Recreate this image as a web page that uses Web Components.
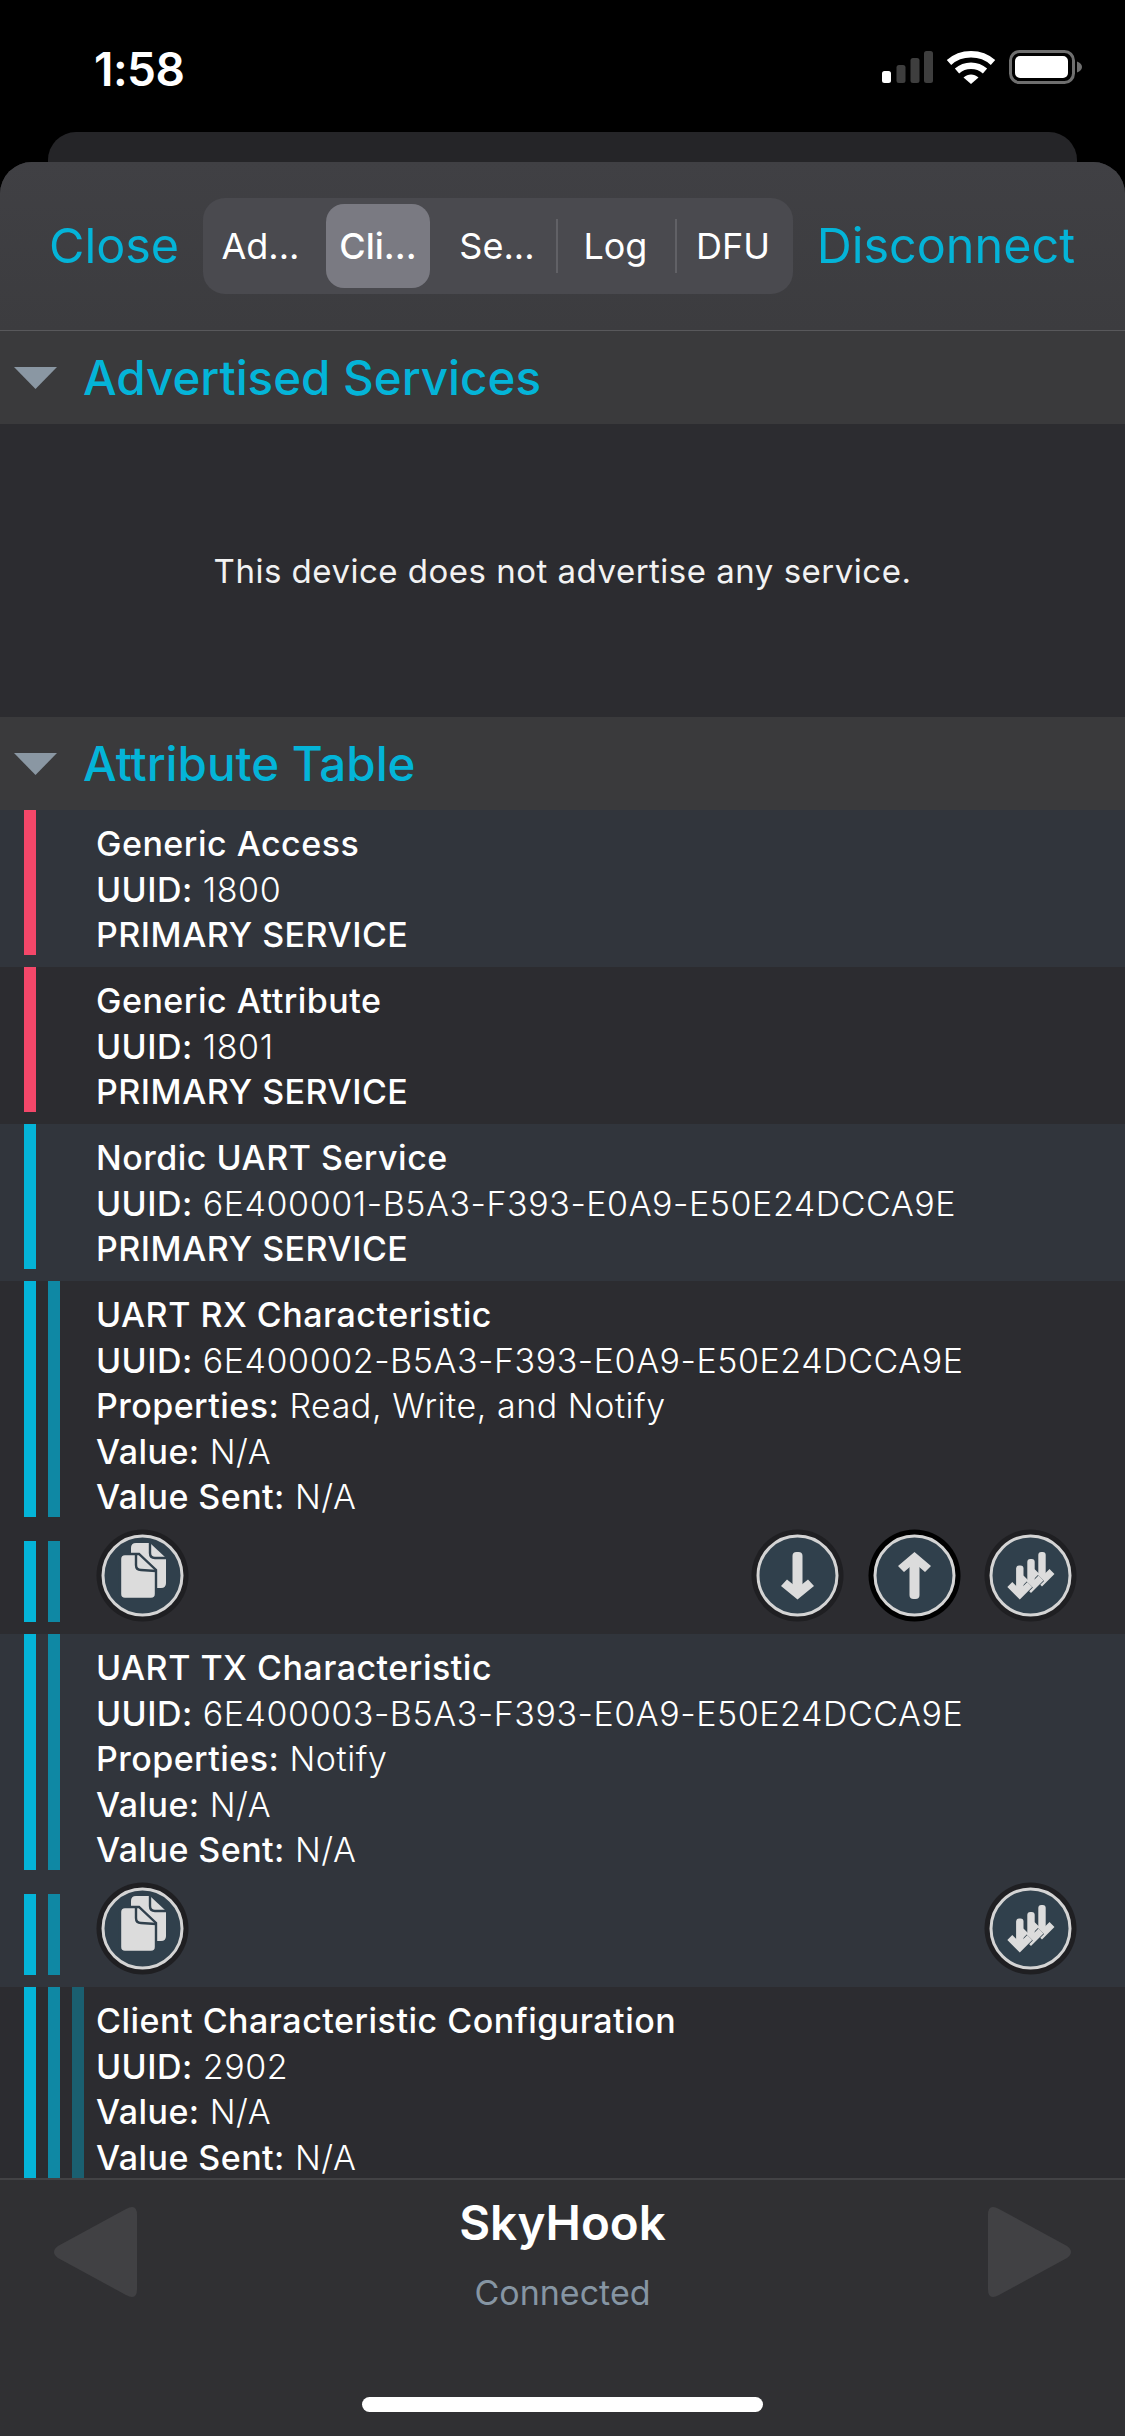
<!DOCTYPE html>
<html>
<head>
<meta charset="utf-8">
<title>SkyHook</title>
<style>
  html, body { margin: 0; padding: 0; background: #000; }
  body { width: 1125px; height: 2436px; overflow: hidden; font-family: Inter, "Liberation Sans", sans-serif; color: #fff; }
  #app { display: flex; flex-direction: column; height: 2436px; }
</style>
</head>
<body>
<div id="app">
  <status-bar></status-bar>
  <back-sheet></back-sheet>
  <main-sheet>
    <nav-bar slot="nav">
      <seg-control>
        <seg-item w="117" style="padding-right:14px">Ad...</seg-item>
        <seg-item w="104" selected>Cli...</seg-item>
        <seg-item w="126" style="padding-left:8px">Se...</seg-item>
        <seg-item w="119" divider>Log</seg-item>
        <seg-item w="112" divider style="padding-left:4px">DFU</seg-item>
      </seg-control>
    </nav-bar>

    <section-header>Advertised Services</section-header>
    <empty-note>This device does not advertise any service.</empty-note>

    <section-header>Attribute Table</section-header>

    <attr-row alt>
      <attr-seg bars="red">
        <attr-line>Generic Access</attr-line>
        <attr-line label="UUID:">1800</attr-line>
        <attr-line>PRIMARY SERVICE</attr-line>
      </attr-seg>
    </attr-row>
    <attr-row>
      <attr-seg bars="red">
        <attr-line>Generic Attribute</attr-line>
        <attr-line label="UUID:">1801</attr-line>
        <attr-line>PRIMARY SERVICE</attr-line>
      </attr-seg>
    </attr-row>
    <attr-row alt>
      <attr-seg bars="teal">
        <attr-line>Nordic UART Service</attr-line>
        <attr-line label="UUID:">6E400001-B5A3-F393-E0A9-E50E24DCCA9E</attr-line>
        <attr-line>PRIMARY SERVICE</attr-line>
      </attr-seg>
    </attr-row>
    <attr-row>
      <attr-seg bars="teal mid">
        <attr-line>UART RX Characteristic</attr-line>
        <attr-line label="UUID:">6E400002-B5A3-F393-E0A9-E50E24DCCA9E</attr-line>
        <attr-line label="Properties:">Read, Write, and Notify</attr-line>
        <attr-line label="Value:">N/A</attr-line>
        <attr-line label="Value Sent:">N/A</attr-line>
      </attr-seg>
      <attr-seg bars="teal mid" actions>
        <round-button icon="copy"></round-button>
        <span class="spring" style="flex:1"></span>
        <round-button icon="down"></round-button>
        <round-button icon="up" active></round-button>
        <round-button icon="multi"></round-button>
      </attr-seg>
    </attr-row>
    <attr-row alt>
      <attr-seg bars="teal mid">
        <attr-line>UART TX Characteristic</attr-line>
        <attr-line label="UUID:">6E400003-B5A3-F393-E0A9-E50E24DCCA9E</attr-line>
        <attr-line label="Properties:">Notify</attr-line>
        <attr-line label="Value:">N/A</attr-line>
        <attr-line label="Value Sent:">N/A</attr-line>
      </attr-seg>
      <attr-seg bars="teal mid" actions>
        <round-button icon="copy"></round-button>
        <span class="spring" style="flex:1"></span>
        <round-button icon="multi"></round-button>
      </attr-seg>
    </attr-row>
    <attr-row>
      <attr-seg bars="teal mid deep">
        <attr-line>Client Characteristic Configuration</attr-line>
        <attr-line label="UUID:">2902</attr-line>
        <attr-line label="Value:">N/A</attr-line>
        <attr-line label="Value Sent:">N/A</attr-line>
      </attr-seg>
    </attr-row>

    <bottom-bar slot="footer" name="SkyHook" state="Connected"></bottom-bar>
  </main-sheet>
</div>

<script>
const FONT = 'Inter, "Liberation Sans", sans-serif';

class StatusBar extends HTMLElement {
  constructor() {
    super();
    this.attachShadow({ mode: 'open' }).innerHTML = `
      <style>
        :host { display: flex; justify-content: space-between; align-items: flex-start; height: 132px; padding: 44px 43px 0 94px; box-sizing: border-box; background: #000; color: #fff; font-family: ${FONT}; }
        .time { font-size: 46px; font-weight: 600; line-height: 50px; letter-spacing: -0.5px; }
        svg { display: block; margin-top: 6px; }
      </style>
      <div class="time">1:58</div>
      <svg width="200" height="36" viewBox="0 0 200 36">
        <rect x="0" y="21" width="9" height="12" rx="2.5" fill="#fff"/>
        <rect x="14.500" y="15" width="9" height="18" rx="2.5" fill="#3e3e3e"/>
        <rect x="28.500" y="8" width="9" height="25" rx="2.5" fill="#3e3e3e"/>
        <rect x="42" y="1" width="9" height="32" rx="2.5" fill="#3e3e3e"/>
        <path d="M67 12.500 C79 1.500 99 1.500 111 12.500" fill="none" stroke="#fff" stroke-width="6.500"/>
        <path d="M75 21 C83 14 95 14 103 21" fill="none" stroke="#fff" stroke-width="6.500"/>
        <path d="M81.500 27.500 C86 23.500 92 23.500 96.500 27.500 L89 34 Z" fill="#fff"/>
        <rect x="128.500" y="1.500" width="63" height="31" rx="9" fill="none" stroke="#6f6f6f" stroke-width="3"/>
        <rect x="133" y="6" width="53" height="22" rx="5" fill="#fff"/>
        <path d="M195 11.500 C198 12.500 200 14.500 200 17 C200 19.500 198 21.500 195 22.500 Z" fill="#6f6f6f"/>
      </svg>
    `;
  }
}
customElements.define('status-bar', StatusBar);

class BackSheet extends HTMLElement {
  constructor() {
    super();
    this.attachShadow({ mode: 'open' }).innerHTML = `
      <style>
        :host { display: block; height: 30px; margin: 0 48px; background: #252528; border-radius: 28px 28px 0 0; }
      </style>
    `;
  }
}
customElements.define('back-sheet', BackSheet);

class MainSheet extends HTMLElement {
  constructor() {
    super();
    this.attachShadow({ mode: 'open' }).innerHTML = `
      <style>
        :host { display: flex; flex-direction: column; flex: 1; min-height: 0; background: #2c2c30; border-radius: 32px 32px 0 0; overflow: hidden; }
        .scroll { flex: 1; min-height: 0; overflow: hidden; }
      </style>
      <slot name="nav"></slot>
      <div class="scroll"><slot></slot></div>
      <slot name="footer"></slot>
    `;
  }
}
customElements.define('main-sheet', MainSheet);

class NavBar extends HTMLElement {
  constructor() {
    super();
    this.attachShadow({ mode: 'open' }).innerHTML = `
      <style>
        :host { display: flex; align-items: center; justify-content: space-between; height: 169px; padding: 0 50px 1px 49px; box-sizing: border-box; background: linear-gradient(#404044, #3c3c3f); border-bottom: 1px solid #58585b; color: #04b4d8; font-family: ${FONT}; font-size: 48.500px; }
        span { white-space: nowrap; }
      </style>
      <span>Close</span>
      <slot></slot>
      <span>Disconnect</span>
    `;
  }
}
customElements.define('nav-bar', NavBar);

class SegControl extends HTMLElement {
  constructor() {
    super();
    this.attachShadow({ mode: 'open' }).innerHTML = `
      <style>
        :host { display: flex; height: 96px; padding: 6px; box-sizing: border-box; background: #4a4a4f; border-radius: 22px; color: #fff; font-family: ${FONT}; }
      </style>
      <slot></slot>
    `;
  }
}
customElements.define('seg-control', SegControl);

class SegItem extends HTMLElement {
  constructor() {
    super();
    this.attachShadow({ mode: 'open' }).innerHTML = `
      <style>
        :host { display: flex; align-items: center; justify-content: center; position: relative; height: 84px; box-sizing: border-box; font-size: 36px; font-weight: 400; white-space: nowrap; }
        :host([selected]) { background: #7a7a82; border-radius: 18px; font-weight: 500; }
        :host([divider])::before { content: ""; position: absolute; left: 0; top: 15px; height: 54px; width: 2px; background: #616166; }
      </style>
      <slot></slot>
    `;
    this.style.width = this.getAttribute('w') + 'px';
  }
}
customElements.define('seg-item', SegItem);

class SectionHeader extends HTMLElement {
  constructor() {
    super();
    this.attachShadow({ mode: 'open' }).innerHTML = `
      <style>
        :host { display: flex; align-items: center; height: 93px; background: #3a3a3c; color: #04b4d8; font-family: ${FONT}; font-size: 47.500px; font-weight: 500; }
        svg { display: block; margin: 0 26px 0 14px; }
      </style>
      <svg width="43" height="22" viewBox="0 0 43 22"><path d="M0 0 H43 L21.500 22 Z" fill="#8a97a3"/></svg>
      <slot></slot>
    `;
  }
}
customElements.define('section-header', SectionHeader);

class EmptyNote extends HTMLElement {
  constructor() {
    super();
    this.attachShadow({ mode: 'open' }).innerHTML = `
      <style>
        :host { display: flex; align-items: center; justify-content: center; height: 293px; color: #f2f2f2; font-family: ${FONT}; font-size: 33px; letter-spacing: 0.5px; }
      </style>
      <slot></slot>
    `;
  }
}
customElements.define('empty-note', EmptyNote);

class AttrRow extends HTMLElement {
  constructor() {
    super();
    this.attachShadow({ mode: 'open' }).innerHTML = `
      <style>
        :host { display: block; padding-bottom: 12px; background: #2c2c30; }
        :host([alt]) { background: #31353c; }
      </style>
      <slot></slot>
    `;
  }
}
customElements.define('attr-row', AttrRow);

const BAR_COLORS = { red: '#f44769', teal: '#04b4d8', mid: '#0f88a4', deep: '#1a5f70' };

class AttrSeg extends HTMLElement {
  constructor() {
    super();
    const bars = this.getAttribute('bars').split(' ')
      .map(name => `<i style="background:${BAR_COLORS[name]}"></i>`).join('');
    this.attachShadow({ mode: 'open' }).innerHTML = `
      <style>
        :host { display: flex; }
        :host([actions]) { margin-top: 12px; }
        .bars { display: flex; gap: 12px; flex: none; width: 96px; padding-left: 24px; box-sizing: border-box; }
        :host([actions]) .bars { margin-top: 12px; }
        i { display: block; flex: none; width: 12px; }
        .body { flex: 1; min-width: 0; padding: 11px 0 0; margin-bottom: -2.500px; }
        :host([actions]) .body { display: flex; gap: 23.500px; padding: 0 48px 0 0; margin: 0; }
      </style>
      <div class="bars">${bars}</div>
      <div class="body"><slot></slot></div>
    `;
  }
}
customElements.define('attr-seg', AttrSeg);

class AttrLine extends HTMLElement {
  constructor() {
    super();
    const label = this.getAttribute('label');
    this.attachShadow({ mode: 'open' }).innerHTML = `
      <style>
        :host { display: block; height: 45.500px; line-height: 45.500px; color: #fff; font-family: ${FONT}; font-size: 34px; font-weight: ${label ? 350 : 550}; letter-spacing: ${label ? 0.55 : 0.5}px; white-space: nowrap; }
        b { font-weight: 550; letter-spacing: 0.45px; }
      </style>
      ${label ? `<b>${label}</b> ` : ''}<slot></slot>
    `;
  }
}
customElements.define('attr-line', AttrLine);

const multiArrow = (x, top, tip) => `
  <path d="M${x - 10} ${tip - 15} L${x} ${tip - 5} L${x + 10} ${tip - 15}" fill="none" stroke="#30404c" stroke-width="8.600"/>
  <rect x="${x - 3.700}" y="${top}" width="7.400" height="${tip - top - 4}" rx="3" fill="#dcdcdc"/>
  <path d="M${x - 10} ${tip - 15} L${x} ${tip - 5} L${x + 10} ${tip - 15}" fill="none" stroke="#dcdcdc" stroke-width="7"/>`;

const ICONS = {
  copy: `
    <path d="M40 14 H54 L70 29 V54 Q70 59 65 59 H40 Q35 59 35 54 V19 Q35 14 40 14 Z" fill="#dcdcdc"/>
    <path d="M54 14 V24 Q54 29 59 29 H70" fill="none" stroke="#30404c" stroke-width="2.400"/>
    <path d="M29 25 H43 L60 41 V65 Q60 70 55 70 H29 Q24 70 24 65 V30 Q24 25 29 25 Z" fill="#dcdcdc" stroke="#30404c" stroke-width="2.400"/>
    <path d="M40 25 V36 Q40 41 45 41 L60 42" fill="none" stroke="#30404c" stroke-width="2.400"/>`,
  down: `
    <rect x="41.500" y="23" width="10" height="40" rx="4" fill="#dcdcdc"/>
    <path d="M46.500 70.500 L30 57 L36 50.500 L46.500 59 L57 50.500 L63 57 Z" fill="#dcdcdc"/>`,
  up: `
    <rect x="41.500" y="30" width="10" height="40" rx="4" fill="#dcdcdc"/>
    <path d="M46.500 23 L30 37 L36 43 L46.500 34 L57 43 L63 37 Z" fill="#dcdcdc"/>`,
  multi: multiArrow(58, 23, 57.500) + multiArrow(47, 30, 64) + multiArrow(35.800, 36.500, 70.500)
};

class RoundButton extends HTMLElement {
  constructor() {
    super();
    this.attachShadow({ mode: 'open' }).innerHTML = `
      <style>
        :host { display: block; flex: none; width: 93px; height: 93px; }
        svg { display: block; }
      </style>
      <svg width="93" height="93" viewBox="0 0 93 93">
        <circle cx="46.500" cy="46.500" r="46" fill="${this.hasAttribute('active') ? '#000' : '#1f1f22'}"/>
        <circle cx="46.500" cy="46.500" r="39.500" fill="#30404c" stroke="#d4d4d4" stroke-width="3"/>
        ${ICONS[this.getAttribute('icon')]}
      </svg>
    `;
  }
}
customElements.define('round-button', RoundButton);

class BottomBar extends HTMLElement {
  constructor() {
    super();
    this.attachShadow({ mode: 'open' }).innerHTML = `
      <style>
        :host { display: flex; flex-direction: column; height: 258px; box-sizing: border-box; background: #303033; border-top: 2px solid #424245; font-family: ${FONT}; }
        .top { display: flex; justify-content: space-between; padding: 26px 54px 0; }
        .title { flex: 1; text-align: center; margin-top: -12px; }
        .name { font-size: 47.500px; font-weight: 600; line-height: 58px; color: #fff; }
        .state { font-size: 34px; line-height: 40px; margin-top: 21px; color: #8695a3; }
        .home { width: 401px; height: 15px; margin: auto auto 24px; border-radius: 8px; background: #fff; }
        svg { display: block; flex: none; }
      </style>
      <div class="top">
        <svg width="83" height="92" viewBox="0 0 83 92"><path d="M72 3 Q83 -3 83 9 V83 Q83 95 72 89 L4 52 Q-4 46 4 40 Z" fill="#414144"/></svg>
        <div class="title">
          <div class="name">${this.getAttribute('name')}</div>
          <div class="state">${this.getAttribute('state')}</div>
        </div>
        <svg width="83" height="92" viewBox="0 0 83 92"><path d="M11 3 Q0 -3 0 9 V83 Q0 95 11 89 L79 52 Q87 46 79 40 Z" fill="#414144"/></svg>
      </div>
      <div class="home"></div>
    `;
  }
}
customElements.define('bottom-bar', BottomBar);
</script>
</body>
</html>
